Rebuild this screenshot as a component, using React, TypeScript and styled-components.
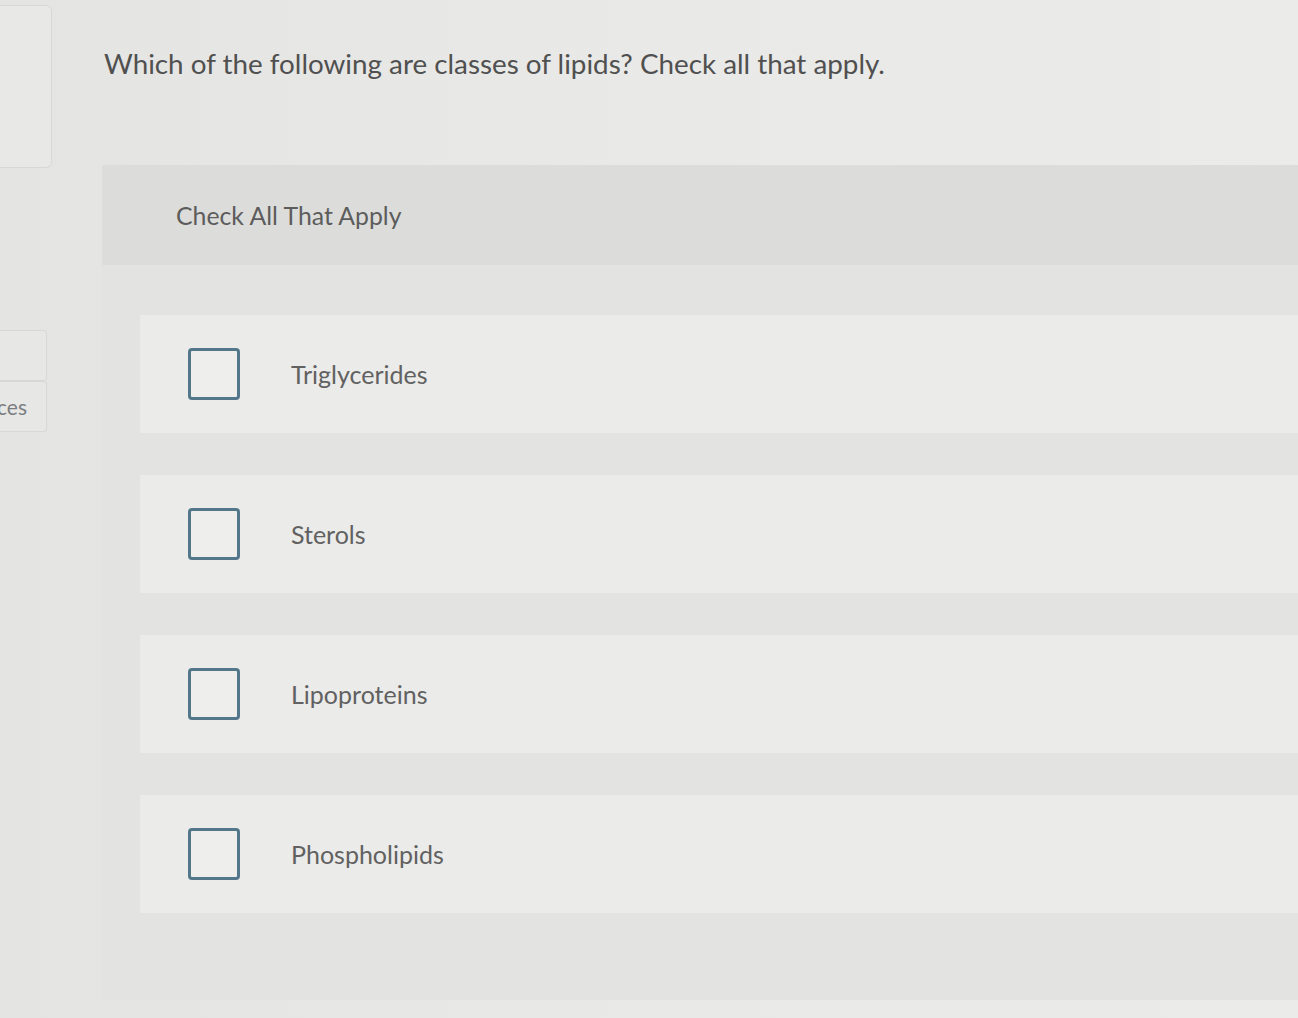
import React from 'react';
import styled, { createGlobalStyle } from 'styled-components';

const GlobalStyle = createGlobalStyle`
  html, body {
    margin: 0;
    padding: 0;
    background: #e6e6e4;
    font-family: Lato, "Open Sans", Arial, sans-serif;
  }
  * { box-sizing: border-box; }
`;

const Page = styled.div`
  display: flex;
  width: 1298px;
  height: 1018px;
  overflow: hidden;
  background: linear-gradient(90deg, #e4e4e2 0%, #e9e9e7 50%, #ebebe9 100%);
`;

const Sidebar = styled.aside`
  width: 52px;
  flex-shrink: 0;
  display: flex;
  flex-direction: column;
  padding-top: 5px;
`;

const SideCard = styled.div`
  height: 163px;
  border: 1px solid #d8d8d6;
  border-left: none;
  border-radius: 0 6px 6px 0;
  background: #e8e8e6;
`;

const SideTabs = styled.div`
  margin-top: 162px;
  width: 47px;
  display: flex;
  flex-direction: column;
`;

const SideTab = styled.div`
  height: 51px;
  border: 1px solid #d8d8d6;
  border-left: none;
  border-radius: 0 4px 4px 0;
  display: flex;
  align-items: center;
  justify-content: flex-end;
  padding-right: 19px;
  font-size: 21px;
  color: #7a7d80;
  background: #e7e7e5;
`;

const Main = styled.main`
  flex: 1;
  display: flex;
  flex-direction: column;
  padding-left: 50px;
`;

const Question = styled.h1`
  margin: 0;
  padding: 47px 0 0 2px;
  height: 165px;
  font-size: 27.8px;
  font-weight: 400;
  color: #505050;
`;

const Panel = styled.section`
  flex: 1;
  margin-bottom: 18px;
  background: #e3e3e1;
  display: flex;
  flex-direction: column;
`;

const PanelHeader = styled.div`
  height: 100px;
  background: #dcdcda;
  display: flex;
  align-items: center;
  padding-left: 74px;
  font-size: 24.8px;
  color: #5c5c5c;
`;

const OptionList = styled.div`
  display: flex;
  flex-direction: column;
  gap: 42px;
  padding: 50px 0 0 38px;
`;

const Option = styled.label`
  height: 118px;
  background: #ebebe9;
  display: flex;
  align-items: center;
  padding-left: 48px;
  cursor: pointer;
`;

const Box = styled.span`
  width: 52px;
  height: 52px;
  border: 3px solid #52778b;
  border-radius: 4px;
  background: #eeeeec;
  flex-shrink: 0;
`;

const OptionText = styled.span`
  margin-left: 51px;
  font-size: 25px;
  color: #616161;
`;

const options = ['Triglycerides', 'Sterols', 'Lipoproteins', 'Phospholipids'];

export default function App() {
  return (
    <>
      <GlobalStyle />
      <Page>
        <Sidebar>
          <SideCard />
          <SideTabs>
            <SideTab />
            <SideTab>ces</SideTab>
          </SideTabs>
        </Sidebar>
        <Main>
          <Question>Which of the following are classes of lipids? Check all that apply.</Question>
          <Panel>
            <PanelHeader>Check All That Apply</PanelHeader>
            <OptionList>
              {options.map((option) => (
                <Option key={option}>
                  <Box />
                  <OptionText>{option}</OptionText>
                </Option>
              ))}
            </OptionList>
          </Panel>
        </Main>
      </Page>
    </>
  );
}
